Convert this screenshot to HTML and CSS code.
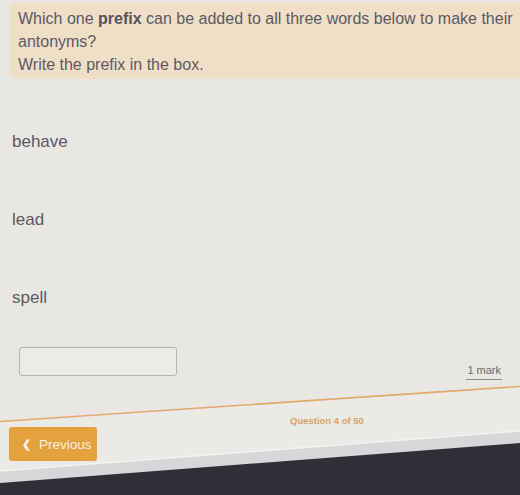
FILE: index.html
```html
<!DOCTYPE html>
<html>
<head>
<meta charset="utf-8">
<link rel="stylesheet" href="styles.css">
</head>
<body>
<div class="page">
  <div class="question">
    <p>Which one <b>prefix</b> can be added to all three words below to make their antonyms?</p>
    <p>Write the prefix in the box.</p>
  </div>
  <div class="words">
    <div class="word">behave</div>
    <div class="word">lead</div>
    <div class="word">spell</div>
  </div>
  <div class="answer-row">
    <div class="answer-box"></div>
    <div class="mark">1 mark</div>
  </div>
  <div class="footer">
    <svg class="footer-bg" width="520" height="114" viewBox="0 0 520 114" aria-hidden="true">
      <polygon points="0,40 520,5 520,49 0,89" fill="#eaeae7"/>
      <line x1="0" y1="39.5" x2="520" y2="4.5" stroke="#e2aa6c" stroke-width="1.6"/>
      <polygon points="0,89 520,49 520,61 0,101" fill="#d7d7d9"/>
      <line x1="0" y1="89" x2="520" y2="49" stroke="#f3f3f2" stroke-width="1.5"/>
      <polygon points="0,101 520,61 520,114 0,114" fill="#2f2f38"/>
    </svg>
    <button class="prev"><span class="chev">&#10094;</span>Previous</button>
    <div class="progress">Question 4 of 50</div>
  </div>
</div>
</body>
</html>
```

FILE: styles.css
```css
html, body {
  margin: 0;
  padding: 0;
}
body {
  background: #e8e7e3;
  font-family: "Liberation Sans", Arial, sans-serif;
  color: #5d5964;
  width: 520px;
  height: 495px;
  overflow: hidden;
}
.page {
  display: flex;
  flex-direction: column;
}
.question {
  margin: 3px 0 0 9px;
  padding: 4px 0 0 9px;
  height: 72px;
  background: #efdfc6;
  border-radius: 6px 0 0 6px;
  font-size: 16px;
  line-height: 23px;
}
.question p {
  margin: 0;
}
.question b {
  color: #57525c;
}
.words {
  display: flex;
  flex-direction: column;
  gap: 58px;
  margin-top: 53px;
  padding-left: 12px;
  font-size: 17px;
  line-height: 20px;
}
.answer-row {
  display: flex;
  justify-content: space-between;
  align-items: flex-end;
  margin-top: 39px;
  padding: 0 18px 0 19px;
}
.answer-box {
  width: 158px;
  height: 29px;
  box-sizing: border-box;
  border: 1.5px solid #b4b2b2;
  border-radius: 3px;
  background: #ecebe8;
}
.mark {
  font-size: 11px;
  line-height: 13px;
  color: #6b6870;
  padding: 0 1px 2px;
  border-bottom: 1px solid #8d8a90;
  margin-bottom: -4px;
}
.footer {
  position: relative;
  margin-top: 6px;
  height: 114px;
  display: flex;
  align-items: flex-start;
}
.footer-bg {
  position: absolute;
  left: 0;
  top: 0;
  z-index: 0;
}
.prev {
  position: relative;
  z-index: 1;
  margin: 45px 0 0 9px;
  width: 88px;
  height: 34px;
  border: none;
  border-radius: 3px;
  background: #e3a23e;
  color: #fcf1de;
  font-family: "Liberation Sans", Arial, sans-serif;
  font-size: 13.5px;
  display: flex;
  align-items: center;
  padding: 0 0 0 13px;
  gap: 8px;
}
.chev {
  font-size: 11px;
  font-weight: bold;
  color: #fbf3e6;
}
.progress {
  position: relative;
  z-index: 1;
  margin: 33px 0 0 193px;
  font-size: 9.5px;
  font-weight: bold;
  color: #d9a35e;
}
```
